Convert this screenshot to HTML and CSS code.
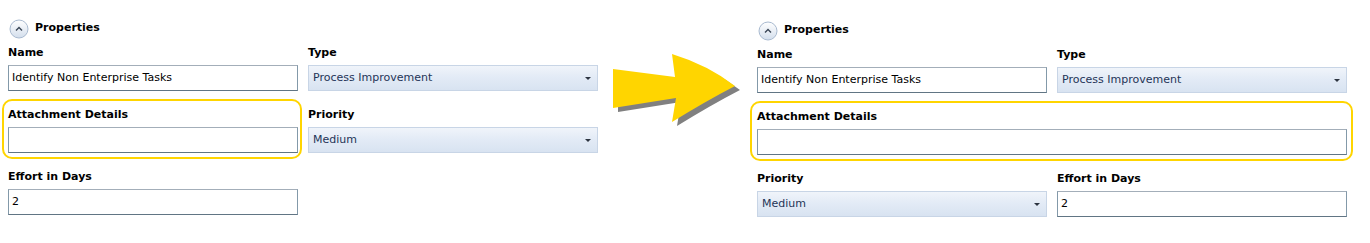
FILE: index.html
```html
<!DOCTYPE html>
<html lang="en">
<head>
	<meta charset="UTF-8">
	<title>Properties layout change</title>
	<link rel="stylesheet" href="styles.css">
</head>
<body>
	<div class="page">
		<div class="panel">
			<div class="head">
				<svg class="toggle" width="20" height="20" viewBox="0 0 20 20">
					<defs>
						<linearGradient id="tg1" x1="0" y1="0" x2="0" y2="1">
							<stop offset="0" stop-color="#ffffff"/>
							<stop offset="1" stop-color="#d3deec"/>
						</linearGradient>
					</defs>
					<circle cx="10" cy="10" r="9" fill="url(#tg1)" stroke="#a9bad0"/>
					<path d="M7 11.5 L10 8.5 L13 11.5" fill="none" stroke="#3a4656" stroke-width="1.4"/>
				</svg>
				<span>Properties</span>
			</div>
			<div class="grid">
				<div class="field">
					<label>Name</label>
					<div class="input">Identify Non Enterprise Tasks</div>
				</div>
				<div class="field">
					<label>Type</label>
					<div class="select">Process Improvement<i></i></div>
				</div>
				<div class="field hl">
					<label>Attachment Details</label>
					<div class="input"></div>
				</div>
				<div class="field">
					<label>Priority</label>
					<div class="select">Medium<i></i></div>
				</div>
				<div class="field">
					<label>Effort in Days</label>
					<div class="input">2</div>
				</div>
			</div>
		</div>

		<svg class="arrow" width="159" height="160" viewBox="598 19 159 160">
			<path d="M613 88 L675 96 L672 73 Q708 84 735 105 Q706 120 672 141 L676 117 L613 127 Z" fill="#808080" transform="translate(5,4)"/>
			<path d="M613 88 L675 96 L672 73 Q708 84 735 105 Q706 120 672 141 L676 117 L613 127 Z" fill="#ffd500"/>
		</svg>

		<div class="panel right">
			<div class="head">
				<svg class="toggle" width="20" height="20" viewBox="0 0 20 20">
					<defs>
						<linearGradient id="tg2" x1="0" y1="0" x2="0" y2="1">
							<stop offset="0" stop-color="#ffffff"/>
							<stop offset="1" stop-color="#d3deec"/>
						</linearGradient>
					</defs>
					<circle cx="10" cy="10" r="9" fill="url(#tg2)" stroke="#a9bad0"/>
					<path d="M7 11.5 L10 8.5 L13 11.5" fill="none" stroke="#3a4656" stroke-width="1.4"/>
				</svg>
				<span>Properties</span>
			</div>
			<div class="grid">
				<div class="field">
					<label>Name</label>
					<div class="input">Identify Non Enterprise Tasks</div>
				</div>
				<div class="field">
					<label>Type</label>
					<div class="select">Process Improvement<i></i></div>
				</div>
				<div class="field hl wide">
					<label>Attachment Details</label>
					<div class="input"></div>
				</div>
				<div class="field">
					<label>Priority</label>
					<div class="select">Medium<i></i></div>
				</div>
				<div class="field">
					<label>Effort in Days</label>
					<div class="input">2</div>
				</div>
			</div>
		</div>
	</div>
</body>
</html>
```

FILE: styles.css
```css
*{
	margin: 0;
	padding: 0;
	box-sizing: border-box;
}
body{
	background: #fff;
	font-family: "DejaVu Sans", Verdana, sans-serif;
	font-size: 11px;
	color: #000;
}
.page{
	display: flex;
	align-items: flex-start;
	padding: 19px 0 0 8px;
}
.panel{
	width: 590px;
}
.panel.right{
	margin-top: 2px;
}
.head{
	display: flex;
	align-items: center;
	gap: 6px;
	height: 19px;
	margin: 0 0 7px 1px;
	font-weight: bold;
}
.head span{
	margin-top: -2px;
}
.toggle{
	display: block;
	flex: none;
}
.grid{
	display: grid;
	grid-template-columns: 290px 290px;
	column-gap: 10px;
	row-gap: 16px;
}
.field label{
	display: block;
	font-weight: bold;
	line-height: 16px;
	margin-bottom: 4px;
}
.input{
	height: 26px;
	line-height: 24px;
	padding-left: 3px;
	border: 1px solid #8399a9;
	border-top-color: #a3aeb9;
	border-bottom-color: #617584;
	background: #fff;
	white-space: nowrap;
}
.select{
	position: relative;
	height: 26px;
	line-height: 24px;
	padding-left: 4px;
	border: 1px solid #c8d5e6;
	background: linear-gradient(#f0f4fa, #e3ebf6 45%, #d8e3f1);
	color: #1f3557;
}
.select i{
	position: absolute;
	right: 6px;
	top: 11px;
	border-left: 3px solid transparent;
	border-right: 3px solid transparent;
	border-top: 3px solid #2c3440;
}
.hl{
	border: 2px solid #ffd500;
	border-radius: 10px;
	margin: -8px -4px -6px -6px;
	padding: 6px 2px 4px 4px;
}
.hl.wide{
	grid-column: span 2;
	margin: -8px -6px -6px -7px;
	padding: 6px 4px 4px 5px;
}
.arrow{
	display: block;
	flex: none;
	margin-top: -19px;
}
```
